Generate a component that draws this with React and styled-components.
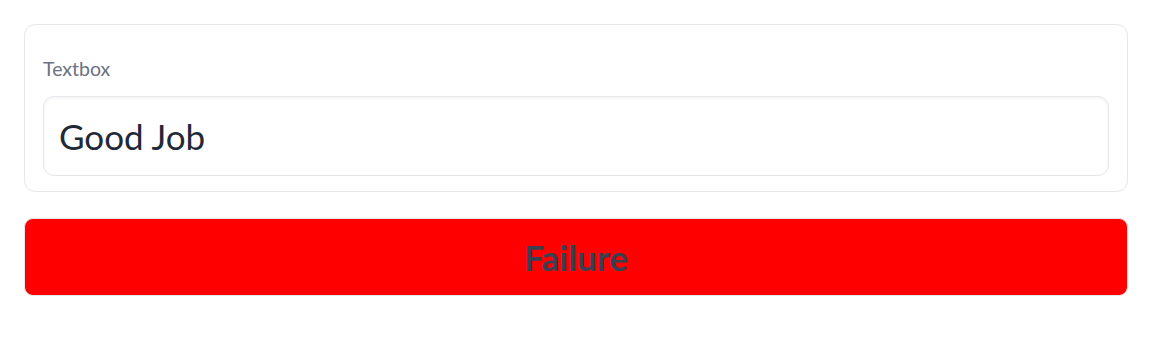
import React from "react";
import styled, { createGlobalStyle } from "styled-components";

const Global = createGlobalStyle`
  html, body { margin: 0; padding: 0; background: #ffffff; }
  body { font-family: "Source Sans Pro", "Lato", "Noto Sans", sans-serif; }
  * { box-sizing: border-box; }
`;

const Page = styled.div`
  padding: 24px 23px 24px 24px;
  display: flex;
  flex-direction: column;
  gap: 26px;
`;

const Card = styled.div`
  border: 1px solid #e5e7eb;
  border-radius: 11px;
  padding: 32px 18px 15px 18px;
  display: flex;
  flex-direction: column;
  gap: 15px;
  background: #ffffff;
`;

const Label = styled.span`
  color: #6b7280;
  font-size: 19.5px;
  line-height: 24px;
`;

const Input = styled.input`
  height: 80px;
  width: 100%;
  border: 1px solid #e5e7eb;
  border-radius: 11px;
  box-shadow: inset 0 1px 3px rgba(0, 0, 0, 0.06);
  padding: 0 15px;
  font-family: inherit;
  font-size: 35px;
  color: #1f2937;
  background: #ffffff;
  outline: none;
`;

const Button = styled.button`
  height: 78px;
  width: 100%;
  border: 1px solid #e5e7eb;
  border-radius: 9px;
  background: #ff0000;
  color: #374151;
  font-family: inherit;
  font-weight: 700;
  font-size: 35px;
  cursor: pointer;
`;

export default function App() {
  return (
    <>
      <Global />
      <Page>
        <Card>
          <Label>Textbox</Label>
          <Input defaultValue="Good Job" />
        </Card>
        <Button>Failure</Button>
      </Page>
    </>
  );
}
